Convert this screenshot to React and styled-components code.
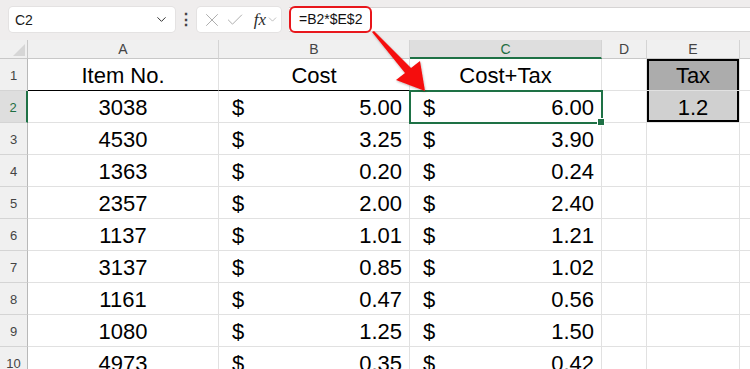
import React from 'react'
import styled, { createGlobalStyle } from 'styled-components'
import { X, Check, ChevronDown } from 'lucide-react'

const GlobalStyle = createGlobalStyle`
  html, body {
    margin: 0;
    padding: 0;
    background: #ffffff;
    font-family: "Liberation Sans", Arial, sans-serif;
    overflow: hidden;
  }
`

const Page = styled.div`
  position: relative;
  width: 750px;
  height: 369px;
  overflow: hidden;
  background: #ffffff;
`

const Toolbar = styled.div`
  display: flex;
  align-items: center;
  height: 40px;
  padding: 7px 0 8px 9px;
  box-sizing: border-box;
  background: #efeded;
`

const NameBox = styled.div`
  display: flex;
  align-items: center;
  justify-content: space-between;
  width: 166px;
  height: 25px;
  box-sizing: border-box;
  padding: 0 6px 0 6px;
  background: #ffffff;
  border-radius: 4px;
  box-shadow: 0 0 0 1px #e4e2e2;
  font-size: 14px;
  color: #1a1a1a;
`

const Dots = styled.div`
  width: 22px;
  text-align: center;
  font-size: 16px;
  font-weight: bold;
  color: #444;
`

const FormulaButtons = styled.div`
  display: flex;
  align-items: center;
  width: 84px;
  height: 25px;
  box-sizing: border-box;
  padding: 0 2px 0 3px;
  background: #ffffff;
  border-radius: 4px;
  box-shadow: 0 0 0 1px #e4e2e2;
  color: #a6a6a6;
`

const IconSlot = styled.span`
  display: flex;
  align-items: center;
  justify-content: center;
  width: ${(p) => p.w}px;
`

const Fx = styled.span`
  font-family: "Liberation Serif", "Times New Roman", serif;
  font-style: italic;
  font-size: 17px;
  color: #2b2b2b;
  width: 20px;
  text-align: right;
`

const FormulaInput = styled.div`
  flex: 1;
  display: flex;
  align-items: center;
  height: 25px;
  margin-left: 8px;
  background: #ffffff;
  border-top: 1px solid #d6d4d4;
  border-bottom: 1px solid #d6d4d4;
  box-sizing: border-box;
`

const Highlight = styled.div`
  display: flex;
  align-items: center;
  height: 27px;
  margin-top: -1px;
  padding: 0 8px;
  box-sizing: border-box;
  border: 2px solid #e8161b;
  border-radius: 6px;
  font-size: 14px;
  color: #111;
  background: #ffffff;
`

const Sheet = styled.div`
  display: grid;
  grid-template-columns: 28px 191px 191px 192px 45px 93px 1fr;
  grid-template-rows: 19px;
  grid-auto-rows: 32px;
`

const Corner = styled.div`
  position: relative;
  background: #f0f0f0;
  border-right: 1px solid #c8c8c8;
  border-bottom: 1px solid #c8c8c8;
  box-sizing: border-box;
  &::after {
    content: '';
    position: absolute;
    right: 2px;
    bottom: 2px;
    width: 0;
    height: 0;
    border-left: 12px solid transparent;
    border-bottom: 12px solid #d6d6d6;
  }
`

const ColHead = styled.div`
  display: flex;
  align-items: center;
  justify-content: center;
  font-size: 14px;
  color: ${(p) => (p.active ? '#1e6e43' : '#444')};
  background: ${(p) => (p.active ? '#dedede' : '#f0f0f0')};
  border-right: 1px solid #d4d4d4;
  border-bottom: ${(p) => (p.active ? '2px solid #1e7145' : '1px solid #c8c8c8')};
  box-sizing: border-box;
`

const RowHead = styled.div`
  display: flex;
  align-items: center;
  justify-content: center;
  padding-top: 2px;
  font-size: 13px;
  color: ${(p) => (p.active ? '#1e6e43' : '#444')};
  background: ${(p) => (p.active ? '#dedede' : '#f0f0f0')};
  border-right: ${(p) => (p.active ? '2px solid #1e7145' : '1px solid #b8b8b8')};
  border-bottom: 1px solid #d4d4d4;
  box-sizing: border-box;
`

const Cell = styled.div`
  position: relative;
  display: flex;
  align-items: center;
  justify-content: ${(p) => (p.center ? 'center' : 'space-between')};
  padding: ${(p) => (p.center ? '2px 0 0 0' : '2px 7px 0 13px')};
  font-size: 22px;
  color: #000;
  background: ${(p) => p.bg || '#ffffff'};
  border-right: 1px solid #e1e1e1;
  border-bottom: ${(p) => (p.headerLine ? '1px solid #000' : '1px solid #e1e1e1')};
  box-sizing: border-box;
  box-shadow: ${(p) => p.frame || 'none'};
  ${(p) =>
    p.selected &&
    `
    outline: 2px solid #1e7145;
    outline-offset: -1px;
    z-index: 2;
    &::after {
      content: '';
      position: absolute;
      right: -4px;
      bottom: -4px;
      width: 6px;
      height: 6px;
      background: #1e7145;
      border: 1px solid #fff;
    }
  `}
`

const Arrow = styled.svg`
  position: absolute;
  left: 0;
  top: 0;
  pointer-events: none;
  z-index: 5;
`

const rows = [
  ['3038', '5.00', '6.00'],
  ['4530', '3.25', '3.90'],
  ['1363', '0.20', '0.24'],
  ['2357', '2.00', '2.40'],
  ['1137', '1.01', '1.21'],
  ['3137', '0.85', '1.02'],
  ['1161', '0.47', '0.56'],
  ['1080', '1.25', '1.50'],
  ['4973', '0.35', '0.42'],
]

const taxTop = 'inset 2px 0 0 #000, inset -2px 0 0 #000, inset 0 2px 0 #000'
const taxBottom = 'inset 2px 0 0 #000, inset -2px 0 0 #000, inset 0 -2px 0 #000'

export default function App() {
  return (
    <Page>
      <GlobalStyle />
      <Toolbar>
        <NameBox>
          <span>C2</span>
          <ChevronDown size={15} strokeWidth={1.6} color="#333" />
        </NameBox>
        <Dots>⋮</Dots>
        <FormulaButtons>
          <IconSlot w={24}>
            <X size={22} strokeWidth={1} />
          </IconSlot>
          <IconSlot w={24}>
            <Check size={20} strokeWidth={1.1} />
          </IconSlot>
          <Fx>fx</Fx>
          <IconSlot w={13}>
            <ChevronDown size={13} strokeWidth={1.3} />
          </IconSlot>
        </FormulaButtons>
        <FormulaInput>
          <Highlight>=B2*$E$2</Highlight>
        </FormulaInput>
      </Toolbar>

      <Sheet>
        <Corner />
        <ColHead>A</ColHead>
        <ColHead>B</ColHead>
        <ColHead active>C</ColHead>
        <ColHead>D</ColHead>
        <ColHead>E</ColHead>
        <ColHead />

        <RowHead>1</RowHead>
        <Cell center headerLine>Item No.</Cell>
        <Cell center headerLine>Cost</Cell>
        <Cell center headerLine>Cost+Tax</Cell>
        <Cell />
        <Cell center bg="#acacac" frame={taxTop}>Tax</Cell>
        <Cell />

        {rows.map((r, i) => (
          <React.Fragment key={r[0]}>
            <RowHead active={i === 0}>{i + 2}</RowHead>
            <Cell center>{r[0]}</Cell>
            <Cell>
              <span>$</span>
              <span>{r[1]}</span>
            </Cell>
            <Cell selected={i === 0}>
              <span>$</span>
              <span>{r[2]}</span>
            </Cell>
            <Cell />
            {i === 0 ? (
              <Cell center bg="#d0d0d0" frame={taxBottom}>1.2</Cell>
            ) : (
              <Cell />
            )}
            <Cell />
          </React.Fragment>
        ))}
      </Sheet>

      <Arrow width="750" height="369" viewBox="0 0 750 369">
        <defs>
          <filter id="sh" x="-20%" y="-20%" width="140%" height="140%">
            <feDropShadow dx="0.5" dy="1" stdDeviation="1" floodColor="#000" floodOpacity="0.3" />
          </filter>
        </defs>
        <path
          d="M372 32 L374 31 L411 68 L420 61 L425 91 L396 80 L405 73 Z"
          fill="#f50d0d"
          filter="url(#sh)"
        />
      </Arrow>
    </Page>
  )
}
